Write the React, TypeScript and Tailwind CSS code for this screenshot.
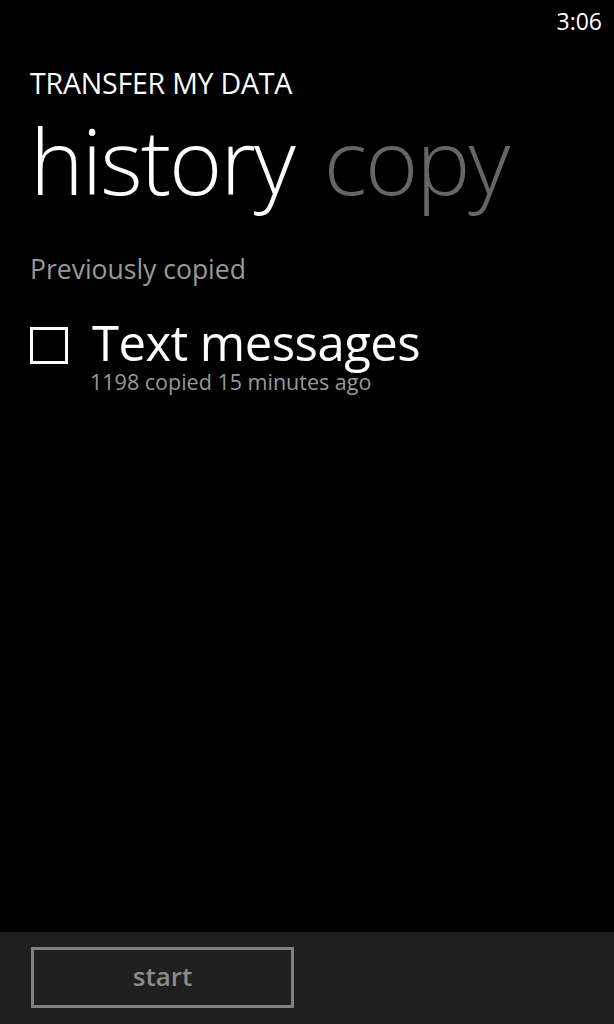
export default function App() {
  return (
    <div className="h-[1024px] w-full bg-black flex flex-col text-white overflow-hidden" style={{ fontFamily: '"Open Sans", "Noto Sans", sans-serif' }}>
      {/* status bar */}
      <div className="h-[40px] flex justify-end items-center pr-[12px] pt-[2px]">
        <span className="text-[23px] leading-none">3:06</span>
      </div>

      <div className="flex-1 flex flex-col pl-[30px]">
        <div className="mt-[29px] text-[28.5px] leading-none tracking-[-0.2px]">TRANSFER MY DATA</div>
        <div className="flex items-baseline gap-[30px] mt-[17px] text-[91px] font-light leading-none tracking-[-2px]">
          <span>history</span>
          <span className="text-[#666666]">copy</span>
        </div>

        <div className="mt-[50px] text-[26.5px] text-[#999999] leading-none">Previously copied</div>

        <div className="mt-[34px] flex items-start gap-[24px]">
          <div className="mt-[11px] w-[38px] h-[37px] border-[3px] border-white shrink-0" />
          <div className="flex flex-col">
            <span className="text-[49px] leading-[52px] tracking-[-0.5px]">Text messages</span>
            <span className="mt-[2px] -ml-[2px] text-[21.5px] text-[#999999] leading-[24px]">1198 copied 15 minutes ago</span>
          </div>
        </div>
      </div>

      {/* app bar */}
      <div className="h-[92px] bg-[#1f1f1f] pl-[31px] pt-[15px]">
        <button className="w-[263px] h-[61px] border-[3px] border-[#808080] text-[#8c8c8c] text-[26px] font-semibold flex items-center justify-center pb-[2px]">
          start
        </button>
      </div>
    </div>
  );
}
